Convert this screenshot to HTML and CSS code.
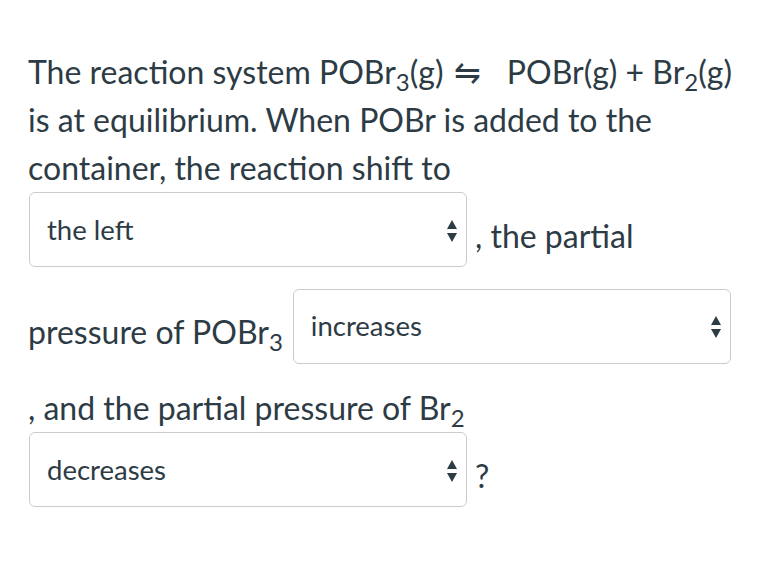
FILE: index.html
```html
<!DOCTYPE html>
<html>
<head>
<meta charset="utf-8">
<link rel="stylesheet" href="styles.css">
</head>
<body>
<div class="question">
  <div class="line">The reaction system POBr<sub>3</sub>(g) <span class="eq">⇋</span> POBr(g) + Br<sub>2</sub>(g)</div>
  <div class="line">is at equilibrium. When POBr is added to the</div>
  <div class="line">container, the reaction shift to</div>
  <div class="row row-a">
    <div class="select"><span class="value">the left</span><svg class="caret" width="10" height="24" viewBox="0 0 10 24"><path d="M5 1 L10 10 L0 10 Z M0 14 L10 14 L5 23 Z" fill="#2d3b45"/></svg></div>
    <span class="text">, the partial</span>
  </div>
  <div class="row row-b">
    <span class="text">pressure of POBr<sub>3</sub></span>
    <div class="select"><span class="value">increases</span><svg class="caret" width="10" height="24" viewBox="0 0 10 24"><path d="M5 1 L10 10 L0 10 Z M0 14 L10 14 L5 23 Z" fill="#2d3b45"/></svg></div>
  </div>
  <div class="line line-c">, and the partial pressure of Br<sub>2</sub></div>
  <div class="row row-d">
    <div class="select"><span class="value">decreases</span><svg class="caret" width="10" height="24" viewBox="0 0 10 24"><path d="M5 1 L10 10 L0 10 Z M0 14 L10 14 L5 23 Z" fill="#2d3b45"/></svg></div>
    <span class="text">?</span>
  </div>
</div>
</body>
</html>
```
FILE: styles.css
```css
html, body {
  margin: 0;
  padding: 0;
  background: #ffffff;
}
.question {
  padding: 48px 0 0 28px;
  font-family: Lato, "Open Sans", sans-serif;
  font-size: 32px;
  line-height: 48px;
  color: #2d3b45;
}
.line {
  height: 48px;
  white-space: nowrap;
}
sub {
  font-size: 24px;
  line-height: 0;
  vertical-align: -7px;
}
.eq {
  font-family: "DejaVu Sans", sans-serif;
  font-weight: 300;
  margin: 0 18px 0 2px;
}
.row {
  display: flex;
  align-items: center;
  gap: 8px;
  height: 75px;
}
.row .text {
  margin-top: 12px;
  white-space: nowrap;
}
.row-b {
  margin-top: 22px;
  gap: 9px;
}
.row-b .text {
  margin-top: 10px;
}
.row-b .select {
  margin-top: -1px;
}
.row-d .text {
  margin-top: 13px;
}
.line-c {
  margin-top: 20px;
}
.row-d {
  margin-top: 0;
}
.select {
  box-sizing: border-box;
  width: 438px;
  height: 75px;
  margin-left: 1px;
  border: 1px solid #c7cdd1;
  border-radius: 6px;
  background: #ffffff;
  display: flex;
  align-items: center;
  justify-content: space-between;
  padding: 0 9px 0 17px;
  font-size: 27.5px;
  line-height: 30px;
}
.caret {
  display: block;
  margin-top: 2px;
}
```
